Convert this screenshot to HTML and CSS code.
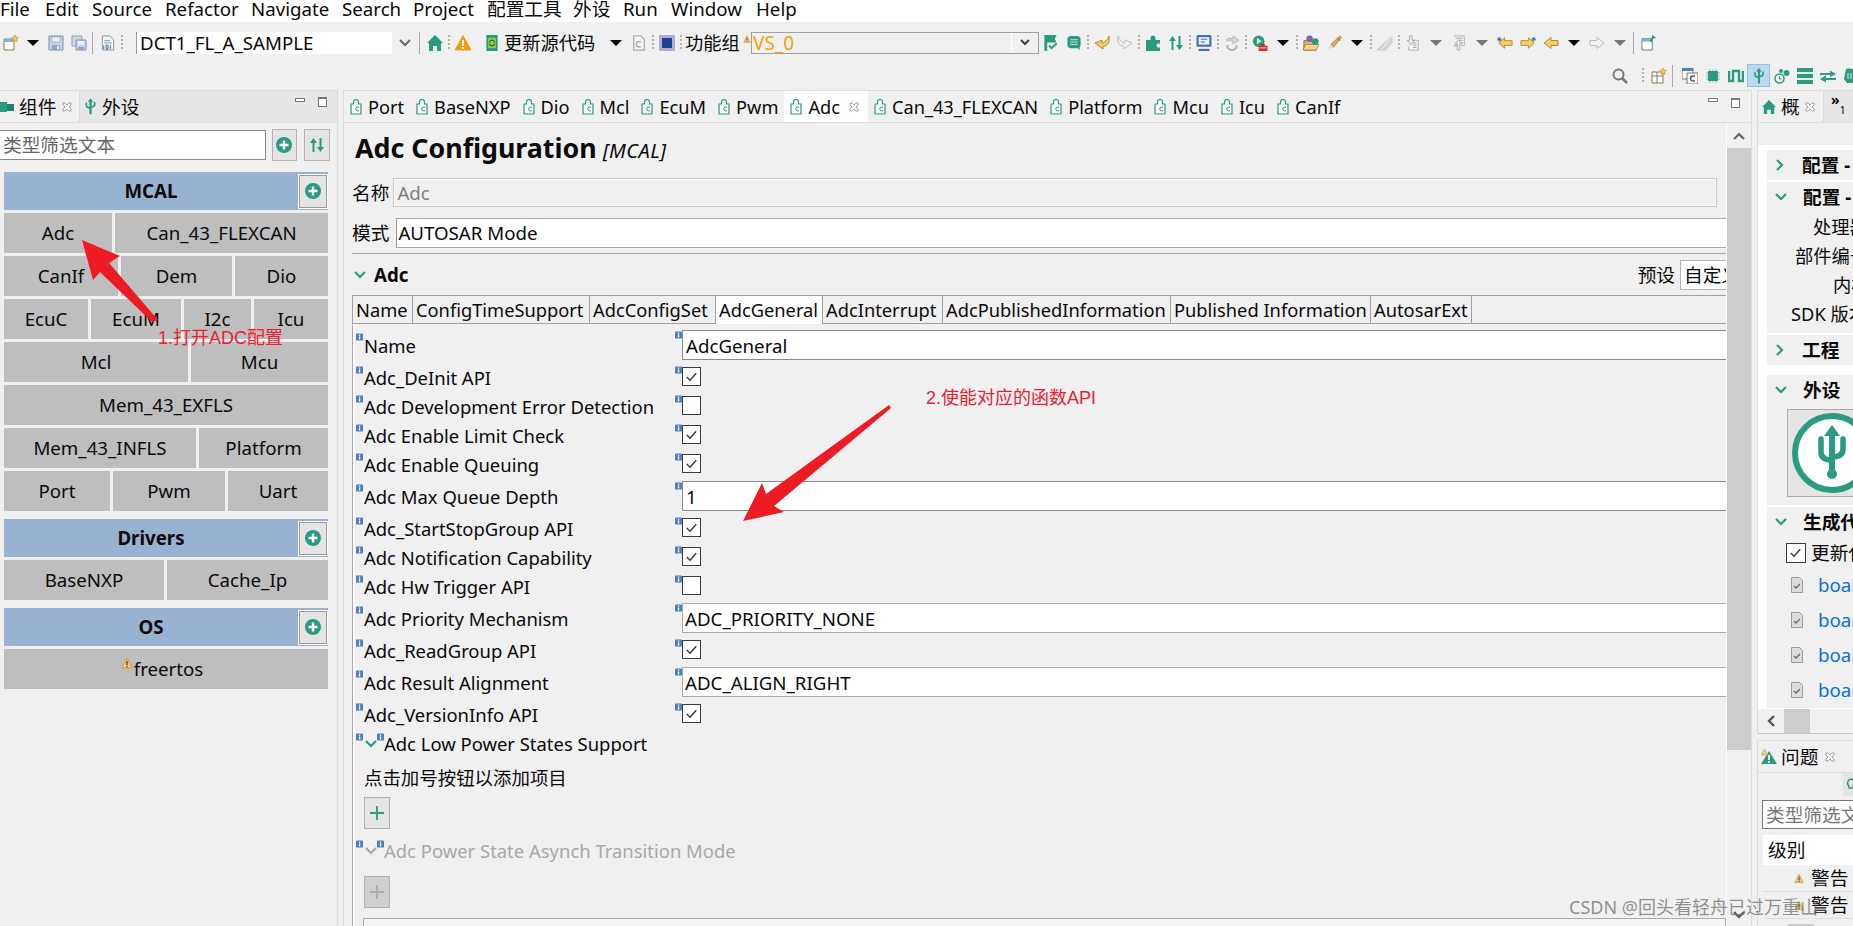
FILE: index.html
```html
<!DOCTYPE html>
<html lang="zh-CN">
<head>
<meta charset="utf-8">
<title>Adc Configuration</title>
<link rel="stylesheet" href="styles.css">
</head>
<body>
<svg class="defs" width="0" height="0">
<defs>
<symbol id="pzl" viewBox="0 0 12 16"><path d="M1 5h2.500V3a2.500 2.500 0 0 1 5 0v2H11v10H1z" fill="#fff" fill-opacity=".5" stroke="#2a9a80" stroke-width="1.200"/><path d="M9 8.200H7.500a1.800 1.800 0 0 0 0 3.600H9" fill="none" stroke="#2a9a80"/></symbol>
<symbol id="tri" viewBox="0 0 12 8"><path d="M0 1h12L6 7z" fill="currentColor"/></symbol>
<symbol id="new" viewBox="0 0 16 16"><path d="M1 4h10v11H1z" fill="#fff" stroke="#8a7a55"/><path d="M1 4h10v3H1z" fill="#7fb0de"/><path d="M12 0l1 2.200 2.500.3-1.800 1.700.5 2.500-2.200-1.200-2.200 1.200.5-2.500L8.500 2.500 11 2.200z" fill="#f5c94a" stroke="#b08a20" stroke-width=".5"/></symbol>
<symbol id="save" viewBox="0 0 16 16"><path d="M1 1h14v14H1z" fill="#c5d4e6" stroke="#7d93ae"/><path d="M4 2h8v5H4z" fill="#eef2f7" stroke="#8fa3bb" stroke-width=".6"/><path d="M4 10h8v5H4z" fill="#8fa6c0"/><path d="M9 11h2v3H9z" fill="#eef2f7"/></symbol>
<symbol id="saveall" viewBox="0 0 16 16"><path d="M1 1h10v10H1z" fill="#d3d8de" stroke="#95a0ad"/><path d="M5 5h10v10H5z" fill="#c5d4e6" stroke="#7d93ae"/><path d="M7 6h6v4H7z" fill="#eef2f7"/><path d="M7 12h6v3H7z" fill="#8fa6c0"/></symbol>
<symbol id="bin" viewBox="0 0 14 17"><path d="M1 1h8l4 4v11H1z" fill="#f4f4f4" stroke="#8492a6"/><path d="M3 6h6M3 8.500h8" stroke="#8492a6"/><path d="M2.500 11v4M5 11h2v4H5zM9.500 11v4" stroke="#3f6aa0" fill="none"/></symbol>
<symbol id="home" viewBox="0 0 16 16"><path d="M8 0L0 8h2v8h4v-5h4v5h4V8h2z" fill="#2a9a80"/></symbol>
<symbol id="warn" viewBox="0 0 16 16"><path d="M8 .5L16 15H0z" fill="#f59b0c" stroke="#f59b0c" stroke-linejoin="round"/><path d="M7 5h2v6H7zM7 12h2v2H7z" fill="#fff"/></symbol>
<symbol id="warnlt" viewBox="0 0 12 12"><path d="M6 1L11 11H1z" fill="#f6cf7f" stroke="#c99a45" stroke-linejoin="round"/><path d="M5.300 4h1.400v4H5.300zM5.300 8.800h1.400v1.400H5.300z" fill="#5b4a20"/></symbol>
<symbol id="gdoc" viewBox="0 0 12 17"><path d="M0 0h12v17H0z" fill="#2a9a80"/><path d="M2 3h8v11H2z" fill="#9ccf3c"/><path d="M3.500 8a2.500 2.500 0 0 1 5 0M8.500 9a2.500 2.500 0 0 1-5 0" fill="none" stroke="#1f6f5c" stroke-width="1.200"/></symbol>
<symbol id="cdoc" viewBox="0 0 14 18"><path d="M1 1h8l4 4v12H1z" fill="#f2f2f2" stroke="#b0b0b0" stroke-width="1.500"/><path d="M9 7.500H7a2.500 2.500 0 0 0 0 6h2" fill="none" stroke="#a8a8a8" stroke-width="1.500"/></symbol>
<symbol id="chip" viewBox="0 0 16 16"><path d="M0 0h16v16H0z" fill="#b3a9d6"/><path d="M3 3h10v10H3z" fill="#1f3f8f"/></symbol>
<symbol id="flag" viewBox="0 0 14 17"><path d="M0 0h13l-2 4 2 4H3v9H0z" fill="#2a9a80"/><path d="M5 11l2.500 3L13 9" fill="none" stroke="#2a9a80" stroke-width="2"/></symbol>
<symbol id="chat" viewBox="0 0 16 17"><rect x="1" y="1" width="14" height="13" rx="4" fill="#2a9a80"/><path d="M4 5h8M4 7.500h8M4 10h8" stroke="#cfe9e2"/><path d="M11 13l3 3v-3z" fill="#2a9a80"/></symbol>
<symbol id="back" viewBox="0 0 16 16"><path d="M15 1c1 6-1 10-6 10v3L1 8l7-3v3c3 0 5-3 7-7z" fill="#f7cd6b" stroke="#b9872a"/></symbol>
<symbol id="fwdg" viewBox="0 0 16 16"><path d="M1 1c-1 6 1 10 6 10v3l8-6-7-3v3C5 8 3 5 1 1z" fill="#f2f2f2" stroke="#bdbdbd"/></symbol>
<symbol id="piece" viewBox="0 0 14 16"><path d="M0 5h4.500V3a2.500 2.500 0 0 1 5 0v2H14v3.500h-1.500a2 2 0 0 0 0 4H14V16H0z" fill="#2a9a80"/></symbol>
<symbol id="updown" viewBox="0 0 14 16"><path d="M3.500 1L0 6h2.500v9h2V6H7zM10.500 15L14 10h-2.500V1h-2v9H7z" fill="#2a9a80"/></symbol>
<symbol id="monitor" viewBox="0 0 14 15"><rect x="0" y="0" width="14" height="11" rx="1.500" fill="#3f6fb5"/><path d="M2 2h10v7H2z" fill="#eaf1fa"/><path d="M4 4h6M4 6.500h4" stroke="#3f6fb5"/><path d="M2 13h10v2H2z" fill="#3f6fb5"/></symbol>
<symbol id="nextg" viewBox="0 0 16 16"><path d="M2 5a6 6 0 0 1 7-1V1l6 4-6 4V6.500a3.500 3.500 0 0 0-5 0z" fill="#d8d8d8" stroke="#a8a8a8" stroke-width=".7"/><path d="M4 10a4.500 3.500 0 1 0 8 0" fill="none" stroke="#b4b4b4" stroke-width="2"/></symbol>
<symbol id="run" viewBox="0 0 17 18"><circle cx="7" cy="7" r="6.500" fill="#2a9a80"/><path d="M5 3.500L10.500 7 5 10.500z" fill="#e8f5c8"/><path d="M7 12h10v6H7z" fill="#d4302a"/><path d="M10 10h4v2h-4z" fill="#a82420"/><path d="M8 14.500h8" stroke="#fff" stroke-width=".8"/></symbol>
<symbol id="folder" viewBox="0 0 17 17"><path d="M1 6h5l1 1h7v9H1z" fill="#e7bb6e" stroke="#8d6a2c"/><path d="M0 16l3-6h14l-3 6z" fill="#f4d48f" stroke="#8d6a2c" stroke-width=".7"/><circle cx="7" cy="4" r="3.500" fill="#7b66b0"/><circle cx="13" cy="7" r="3.500" fill="#2a9a80"/></symbol>
<symbol id="pen" viewBox="0 0 17 17"><path d="M15 1l1.500 1.500L8 13l-3-3z" fill="#e9a94a" stroke="#9b6c22" stroke-width=".7"/><path d="M5 10l3 3-3 1.500-1.500-1z" fill="#d9d9d9"/><path d="M0 17l3-4 2 2z" fill="#f6e7b8"/><path d="M12 3l3 3" stroke="#6c4a16"/></symbol>
<symbol id="knife" viewBox="0 0 17 17"><path d="M16 1L0 16h9l7-8z" fill="#d6d6d6" stroke="#b5b5b5" stroke-width=".6"/><path d="M16 1L10 9l-6 7" fill="none" stroke="#f4f4f4"/></symbol>
<symbol id="ddoc" viewBox="0 0 14 18"><path d="M5 6h8v11H2v-4" fill="#f2f2f2" stroke="#b0b0b0"/><path d="M7 9h4M7 11.500h4M7 14h4" stroke="#9e9e9e"/><path d="M3 1h3v5h2.500L4.500 11 .5 6H3z" fill="#ededed" stroke="#a8a8a8"/></symbol>
<symbol id="udoc" viewBox="0 0 14 18"><path d="M1 1h12v11H9M5 12H1z" fill="#f2f2f2" stroke="#b0b0b0"/><path d="M3 3.500h8M7 6h4M7 8.500h4" stroke="#9e9e9e"/><path d="M5 17h3v-7h2.500L6.500 5l-4 5H5z" fill="#ededed" stroke="#a8a8a8"/></symbol>
<symbol id="bstar" viewBox="0 0 17 13"><path d="M16 4H8V1L2 6.500 8 12V9h8z" fill="#f7cd6b" stroke="#b9872a"/><path d="M2.500 0v5M0 2.500h5M.8.800l3.400 3.400M4.200.8L.8 4.200" stroke="#2f5f9f" stroke-width=".9"/></symbol>
<symbol id="fstar" viewBox="0 0 17 13"><path d="M1 4h8V1l6 5.500L9 12V9H1z" fill="#f7cd6b" stroke="#b9872a"/><path d="M14.500 0v5M12 2.500h5M12.800.8l3.400 3.400M16.200.8l-3.400 3.400" stroke="#2f5f9f" stroke-width=".9"/></symbol>
<symbol id="arrl" viewBox="0 0 16 13"><path d="M15 4H8V1L1 6.500 8 12V9h7z" fill="#f7cd6b" stroke="#b9872a"/></symbol>
<symbol id="arrrg" viewBox="0 0 16 13"><path d="M1 4h7V1l7 5.500L8 12V9H1z" fill="#f4f4f4" stroke="#bdbdbd"/></symbol>
<symbol id="pin" viewBox="0 0 17 17"><path d="M1 4h11v12H1z" fill="#fff" stroke="#85734d"/><path d="M1 4h11v3H1z" fill="#7fb0de"/><path d="M12 0l4 3-3 1-2 4-2-2 2-2z" fill="#2a9a80"/></symbol>
<symbol id="search" viewBox="0 0 16 16"><circle cx="6.500" cy="6.500" r="5" fill="none" stroke="#7a7a7a" stroke-width="2"/><path d="M10 10l5 5" stroke="#7a7a7a" stroke-width="2.500"/></symbol>
<symbol id="addtbl" viewBox="0 0 16 16"><path d="M1 4h11v11H1z" fill="#fff" stroke="#8a7a55"/><path d="M1 8h11M6 4v11" stroke="#8a7a55"/><path d="M12 0l1 2 2.500.4-1.800 1.700.4 2.400-2.100-1.200-2.200 1.200.5-2.400L8.500 2.400 11 2z" fill="#f5c94a" stroke="#b08a20" stroke-width=".5"/></symbol>
<symbol id="cview" viewBox="0 0 16 16"><path d="M0 0h11v11H0z" fill="#fff" stroke="#85734d"/><path d="M0 0h11v3H0z" fill="#4f81bd"/><path d="M5 5h11v11H5z" fill="#f7f7f7" stroke="#85734d"/><path d="M13 8h-2a2.500 2.500 0 0 0 0 5h2" fill="none" stroke="#2f5f9f" stroke-width="1.500"/></symbol>
<symbol id="tchip" viewBox="0 0 16 16"><path d="M1 5h14M1 8h14M1 11h14M5 1v14M8 1v14M11 1v14" stroke="#2a9a80" stroke-opacity=".55"/><path d="M3 3h10v10H3z" fill="#2a9a80"/></symbol>
<symbol id="wave" viewBox="0 0 16 16"><path d="M1 3v10h4V3h6v10h4V3" fill="none" stroke="#2a9a80" stroke-width="2.400"/></symbol>
<symbol id="cactus" viewBox="0 0 12 18"><path d="M6 0l3 4H7.200v12.500a1.200 1.200 0 0 1-2.400 0V4H3z" fill="#2a9a80"/><path d="M1.500 5.500v2.500c0 1.500 1 2.500 4 2.500M10.500 4.500V7c0 1.500-1 2.500-4.500 2.500" fill="none" stroke="#2a9a80" stroke-width="1.800" stroke-linecap="round"/></symbol>
<symbol id="timer" viewBox="0 0 16 16"><circle cx="5.500" cy="10.500" r="4.500" fill="none" stroke="#2a9a80" stroke-width="1.500"/><path d="M5.500 8v3h2" fill="none" stroke="#2a9a80"/><circle cx="12.500" cy="5" r="3" fill="#2a9a80"/><circle cx="7" cy="3" r="2" fill="#2a9a80"/></symbol>
<symbol id="stack" viewBox="0 0 16 16"><path d="M0 0h16v4H0zM0 6h16v4H0zM0 12h16v4H0z" fill="#2a9a80"/></symbol>
<symbol id="swap" viewBox="0 0 16 16"><path d="M0 5h10V2.500L16 6l-6 3V7H0zM16 10H6V7.500L0 11l6 3.500V12h10z" fill="#2a9a80"/></symbol>
<symbol id="last" viewBox="0 0 16 16"><path d="M3 1c3-1 9 0 11 2v9l-5 3H4L1 11z" fill="#2a9a80"/><path d="M5 5v6M8 5v6M11 5v6" stroke="#d8efe9"/></symbol>
<symbol id="plusc" viewBox="0 0 16 16"><circle cx="8" cy="8" r="8" fill="#2a9a80"/><path d="M8 3.500v9M3.500 8h9" stroke="#fff" stroke-width="2.400"/></symbol>
<symbol id="x" viewBox="0 0 10 10"><path d="M1 1l2 0 2 2 2-2 2 0 0 2-2 2 2 2 0 2-2 0-2-2-2 2-2 0 0-2 2-2-2-2z" fill="#fff" stroke="#8a8a8a" stroke-width=".8"/></symbol>
<symbol id="pieces" viewBox="0 0 14 14"><path d="M0 2h7v3h3v3h-3v4H0z" fill="#2a9a80"/><path d="M7 4h7v7H7z" fill="#22806a"/></symbol>
<symbol id="fdoc" viewBox="0 0 12 16"><path d="M.5.5h8l3 3v12H.5z" fill="#dcdcdc" stroke="#9a9a9a"/><path d="M3 9l2 2 4-4" fill="none" stroke="#666" stroke-width="1.300"/></symbol>
<symbol id="lamp" viewBox="0 0 10 14"><path d="M5 2a4 4 0 0 0-2 7v2h4V9a4 4 0 0 0-2-7z" fill="none" stroke="#2a9a80" stroke-width="1.500"/></symbol>
<symbol id="problem" viewBox="0 0 16 16"><path d="M8 2L16 15H0z" fill="#2a9a80"/><path d="M7 6h2v5H7zM7 12h2v2H7z" fill="#fff"/><path d="M3.500 0L7 6H0z" fill="#f6cf7f" stroke="#c99a45" stroke-width=".6"/></symbol>
<symbol id="info" viewBox="0 0 8 8"><rect width="8" height="8" rx="1" fill="#4f7fb8"/><path d="M3.300 1.200h1.500v1.300H3.300zM3.300 3.300h1.500v3.500H3.300z" fill="#fff"/></symbol>
<symbol id="check" viewBox="0 0 18 18"><path d="M4 9.500l3.500 3.500L14 5.500" fill="none" stroke="#3a3a3a" stroke-width="1.500"/></symbol>
<symbol id="usbbig" viewBox="0 0 80 80"><circle cx="40" cy="40" r="37" fill="#fff" stroke="#2a9a80" stroke-width="6"/><path d="M40 12l8 11h-5v37a3 3 0 1 1-6 0V23h-5z" fill="#2a9a80"/><circle cx="40" cy="61" r="5" fill="#2a9a80"/><path d="M29 26v13c0 5 3 8 11 8M51 26v10c0 5-3 8-11 8" fill="none" stroke="#2a9a80" stroke-width="5.500" stroke-linecap="round"/></symbol>
</defs>
</svg>

<nav class="menubar">
<span class="mi w45">File</span><span class="mi w47">Edit</span><span class="mi w73">Source</span><span class="mi w86">Refactor</span><span class="mi w91">Navigate</span><span class="mi w71">Search</span><span class="mi w74">Project</span><span class="mi w86">配置工具</span><span class="mi w50">外设</span><span class="mi w48">Run</span><span class="mi w85">Window</span><span class="mi">Help</span>
</nav>

<header class="toolbar">
<div class="tbrow">
<span class="slot w22"><svg class="ic16"><use href="#new"/></svg></span>
<span class="slot w22 blk"><svg class="tri"><use href="#tri"/></svg></span>
<span class="slot"><svg class="ic16"><use href="#save"/></svg></span>
<span class="slot"><svg class="ic16"><use href="#saveall"/></svg></span>
<i class="vsep"></i>
<span class="slot"><svg class="ic16"><use href="#bin"/></svg></span>
<i class="grip"></i>
<span class="pick">DCT1_FL_A_SAMPLE</span>
<span class="slot w25"><svg class="chev" viewBox="0 0 12 8"><path d="M1 1l5 5 5-5" fill="none" stroke="#666" stroke-width="2"/></svg></span>
<i class="vsep"></i>
<span class="slot"><svg class="ic16"><use href="#home"/></svg></span>
<i class="grip"></i>
<span class="slot"><svg class="ic16"><use href="#warn"/></svg></span>
<span class="slot ml6"><svg class="ic16"><use href="#gdoc"/></svg></span>
<span class="tb-label w89 ml1 fs183">更新源代码</span>
<span class="slot ml11 blk"><svg class="tri"><use href="#tri"/></svg></span>
<span class="slot"><svg class="ic16"><use href="#cdoc"/></svg></span>
<i class="grip"></i>
<span class="slot"><svg class="ic16"><use href="#chip"/></svg></span>
<i class="grip"></i>
<span class="tb-label w54 ml2 fs183">功能组</span>
<svg class="mini"><use href="#warnlt"/></svg>
<span class="combo"><span class="combo-t">VS_0</span><span class="combo-b"><svg class="chev" viewBox="0 0 12 8"><path d="M2 1l4 4 4-4" fill="none" stroke="#444" stroke-width="2"/></svg></span></span>
<span class="slot"><svg class="ic16"><use href="#flag"/></svg></span>
<span class="slot"><svg class="ic16"><use href="#chat"/></svg></span>
<i class="grip"></i>
<span class="slot"><svg class="ic16"><use href="#back"/></svg></span>
<span class="slot"><svg class="ic16"><use href="#fwdg"/></svg></span>
<i class="grip"></i>
<span class="slot"><svg class="ic16"><use href="#piece"/></svg></span>
<span class="slot"><svg class="ic16"><use href="#updown"/></svg></span>
<i class="grip"></i>
<span class="slot"><svg class="ic16"><use href="#monitor"/></svg></span>
<i class="grip"></i>
<span class="slot"><svg class="ic16"><use href="#nextg"/></svg></span>
<i class="grip"></i>
<span class="slot"><svg class="ic16"><use href="#run"/></svg></span>
<span class="slot blk"><svg class="tri"><use href="#tri"/></svg></span>
<i class="grip"></i>
<span class="slot"><svg class="ic16"><use href="#folder"/></svg></span>
<span class="slot"><svg class="ic16"><use href="#pen"/></svg></span>
<span class="slot blk"><svg class="tri"><use href="#tri"/></svg></span>
<i class="grip"></i>
<span class="slot"><svg class="ic16"><use href="#knife"/></svg></span>
<i class="grip"></i>
<span class="slot"><svg class="ic16"><use href="#ddoc"/></svg></span>
<span class="slot gry"><svg class="tri"><use href="#tri"/></svg></span>
<span class="slot"><svg class="ic16"><use href="#udoc"/></svg></span>
<span class="slot gry"><svg class="tri"><use href="#tri"/></svg></span>
<span class="slot"><svg class="ic16"><use href="#bstar"/></svg></span>
<span class="slot"><svg class="ic16"><use href="#fstar"/></svg></span>
<span class="slot"><svg class="ic16"><use href="#arrl"/></svg></span>
<span class="slot blk"><svg class="tri"><use href="#tri"/></svg></span>
<span class="slot"><svg class="ic16"><use href="#arrrg"/></svg></span>
<span class="slot gry"><svg class="tri"><use href="#tri"/></svg></span>
<i class="vsep"></i>
<span class="slot"><svg class="ic16"><use href="#pin"/></svg></span>
</div>
<div class="tbrow row2">
<span class="slot"><svg class="ic16"><use href="#search"/></svg></span>
<i class="grip grip-far"></i>
<span class="slot"><svg class="ic16"><use href="#addtbl"/></svg></span>
<i class="vsep"></i>
<span class="slot"><svg class="ic16"><use href="#cview"/></svg></span>
<span class="slot"><svg class="ic16"><use href="#tchip"/></svg></span>
<span class="slot"><svg class="ic16"><use href="#wave"/></svg></span>
<span class="slot sel"><svg class="ic16"><use href="#cactus"/></svg></span>
<span class="slot"><svg class="ic16"><use href="#timer"/></svg></span>
<span class="slot"><svg class="ic16"><use href="#stack"/></svg></span>
<span class="slot"><svg class="ic16"><use href="#swap"/></svg></span>
<span class="slot"><svg class="ic16"><use href="#last"/></svg></span>
</div>
</header>

<main class="workbench">
<aside class="leftpane">
<div class="viewtabs">
<div class="vt-active"><svg class="ic14"><use href="#pieces"/></svg><span>组件</span><svg class="xic"><use href="#x"/></svg></div>
<div class="vt-rest"><svg class="ic-usb"><use href="#cactus"/></svg><span>外设</span><i class="minb"></i><i class="maxb"></i></div>
</div>
<div class="filterbar">
<span class="filter">类型筛选文本</span>
<span class="sqbtn"><svg class="ic16"><use href="#plusc"/></svg></span>
<span class="sqbtn"><svg class="ic16"><use href="#updown"/></svg></span>
</div>
<div class="palette">
<div class="ghead"><span>MCAL</span><b class="addb"><svg class="ic16"><use href="#plusc"/></svg></b></div>
<div class="crow r1"><span>Adc</span><span>Can_43_FLEXCAN</span></div>
<div class="crow r2"><span>CanIf</span><span>Dem</span><span>Dio</span></div>
<div class="crow r3"><span>EcuC</span><span>EcuM</span><span>I2c</span><span>Icu</span></div>
<div class="crow r4"><span>Mcl</span><span>Mcu</span></div>
<div class="crow r5"><span>Mem_43_EXFLS</span></div>
<div class="crow r6"><span>Mem_43_INFLS</span><span>Platform</span></div>
<div class="crow r7"><span>Port</span><span>Pwm</span><span>Uart</span></div>
<div class="ghead gap"><span>Drivers</span><b class="addb"><svg class="ic16"><use href="#plusc"/></svg></b></div>
<div class="crow r8"><span>BaseNXP</span><span>Cache_Ip</span></div>
<div class="ghead gap"><span>OS</span><b class="addb"><svg class="ic16"><use href="#plusc"/></svg></b></div>
<div class="crow r5"><span><svg class="warnup"><use href="#warnlt"/></svg>freertos</span></div>
</div>
</aside>

<section class="editor">
<div class="edtabs">
<span class="et"><svg class="pz"><use href="#pzl"/></svg>Port</span>
<span class="et"><svg class="pz"><use href="#pzl"/></svg>BaseNXP</span>
<span class="et"><svg class="pz"><use href="#pzl"/></svg>Dio</span>
<span class="et"><svg class="pz"><use href="#pzl"/></svg>Mcl</span>
<span class="et"><svg class="pz"><use href="#pzl"/></svg>EcuM</span>
<span class="et"><svg class="pz"><use href="#pzl"/></svg>Pwm</span>
<span class="et et-on"><svg class="pz"><use href="#pzl"/></svg>Adc<svg class="xic x9"><use href="#x"/></svg></span>
<span class="et"><svg class="pz"><use href="#pzl"/></svg>Can_43_FLEXCAN</span>
<span class="et"><svg class="pz"><use href="#pzl"/></svg>Platform</span>
<span class="et"><svg class="pz"><use href="#pzl"/></svg>Mcu</span>
<span class="et"><svg class="pz"><use href="#pzl"/></svg>Icu</span>
<span class="et"><svg class="pz"><use href="#pzl"/></svg>CanIf</span>
<i class="minb min-ed"></i><i class="maxb max-ed"></i>
</div>
<div class="edbody">
<div class="form">
<div class="title"><h1>Adc Configuration</h1><em>[MCAL]</em></div>
<div class="frow fr-name"><label>名称</label><span class="ro">Adc</span></div>
<div class="frow fr-mode"><label>模式</label><span class="in">AUTOSAR Mode</span></div>
<hr class="sep">
<div class="sect"><svg class="chv" viewBox="0 0 12 8"><path d="M1 1l5 5 5-5" fill="none" stroke="#2a9a80" stroke-width="2.200"/></svg><b>Adc</b><span class="preset">预设</span><span class="pcombo">自定义</span></div>
<div class="subtabs">
<span class="st w60">Name</span><span class="st w177">ConfigTimeSupport</span><span class="st w126">AdcConfigSet</span><span class="st st-on w107">AdcGeneral</span><span class="st w120">AdcInterrupt</span><span class="st w228">AdcPublishedInformation</span><span class="st w200">Published Information</span><span class="st w101">AutosarExt</span>
</div>
<div class="params">
<div class="p p-in"><svg class="i1"><use href="#info"/></svg><span class="pl">Name</span><svg class="i2"><use href="#info"/></svg><span class="pv">AdcGeneral</span></div>
<div class="p"><svg class="i1"><use href="#info"/></svg><span class="pl">Adc_DeInit API</span><svg class="i2"><use href="#info"/></svg><span class="cb"><svg><use href="#check"/></svg></span></div>
<div class="p"><svg class="i1"><use href="#info"/></svg><span class="pl">Adc Development Error Detection</span><svg class="i2"><use href="#info"/></svg><span class="cb"></span></div>
<div class="p"><svg class="i1"><use href="#info"/></svg><span class="pl">Adc Enable Limit Check</span><svg class="i2"><use href="#info"/></svg><span class="cb"><svg><use href="#check"/></svg></span></div>
<div class="p"><svg class="i1"><use href="#info"/></svg><span class="pl">Adc Enable Queuing</span><svg class="i2"><use href="#info"/></svg><span class="cb"><svg><use href="#check"/></svg></span></div>
<div class="p p-in"><svg class="i1"><use href="#info"/></svg><span class="pl">Adc Max Queue Depth</span><svg class="i2"><use href="#info"/></svg><span class="pv">1</span></div>
<div class="p"><svg class="i1"><use href="#info"/></svg><span class="pl">Adc_StartStopGroup API</span><svg class="i2"><use href="#info"/></svg><span class="cb"><svg><use href="#check"/></svg></span></div>
<div class="p"><svg class="i1"><use href="#info"/></svg><span class="pl">Adc Notification Capability</span><svg class="i2"><use href="#info"/></svg><span class="cb"><svg><use href="#check"/></svg></span></div>
<div class="p"><svg class="i1"><use href="#info"/></svg><span class="pl">Adc Hw Trigger API</span><svg class="i2"><use href="#info"/></svg><span class="cb"></span></div>
<div class="p p-in"><svg class="i1"><use href="#info"/></svg><span class="pl">Adc Priority Mechanism</span><svg class="i2"><use href="#info"/></svg><span class="pv pv-c">ADC_PRIORITY_NONE</span></div>
<div class="p"><svg class="i1"><use href="#info"/></svg><span class="pl">Adc_ReadGroup API</span><svg class="i2"><use href="#info"/></svg><span class="cb"><svg><use href="#check"/></svg></span></div>
<div class="p p-in"><svg class="i1"><use href="#info"/></svg><span class="pl">Adc Result Alignment</span><svg class="i2"><use href="#info"/></svg><span class="pv pv-c">ADC_ALIGN_RIGHT</span></div>
<div class="p"><svg class="i1"><use href="#info"/></svg><span class="pl">Adc_VersionInfo API</span><svg class="i2"><use href="#info"/></svg><span class="cb"><svg><use href="#check"/></svg></span></div>
<div class="grp g1"><svg class="i1"><use href="#info"/></svg><svg class="chv2" viewBox="0 0 12 8"><path d="M1 1l5 5 5-5" fill="none" stroke="#2a9a80" stroke-width="2.200"/></svg><svg class="i1"><use href="#info"/></svg><span>Adc Low Power States Support</span></div>
<div class="hint">点击加号按钮以添加项目</div>
<span class="addsq"><svg viewBox="0 0 16 16"><path d="M8 1v14M1 8h14" stroke="#2a9a80" stroke-width="1.800"/></svg></span>
<div class="grp g2"><svg class="i1"><use href="#info"/></svg><svg class="chv2" viewBox="0 0 12 8"><path d="M1 1l5 5 5-5" fill="none" stroke="#aaa" stroke-width="2.200"/></svg><svg class="i1"><use href="#info"/></svg><span>Adc Power State Asynch Transition Mode</span></div>
<span class="addsq off"><svg viewBox="0 0 16 16"><path d="M8 1v14M1 8h14" stroke="#aaa" stroke-width="1.800"/></svg></span>
<div class="tblbox"></div>
</div>
</div>
<div class="vscroll">
<span class="up"><svg viewBox="0 0 12 8"><path d="M1 7l5-5 5 5" fill="none" stroke="#666" stroke-width="2.200"/></svg></span>
<span class="thumb"></span>
<span class="dn"><svg viewBox="0 0 12 8"><path d="M1 1l5 5 5-5" fill="none" stroke="#555" stroke-width="2.200"/></svg></span>
</div>
</div>
</section>

<aside class="rightpane">
<div class="ovpanel">
<div class="rtabs">
<div class="rt-on"><svg class="ic14"><use href="#home"/></svg><span>概</span><svg class="xic"><use href="#x"/></svg></div>
<div class="rt-more"><span class="chevs">»</span><sub>1</sub></div>
</div>
<div class="rbody">
<div class="rs rs30"><svg class="chr" viewBox="0 0 8 12"><path d="M1 1l5 5-5 5" fill="none" stroke="#2a9a80" stroke-width="2.200"/></svg><b>配置 - 硬件</b></div>
<div class="rs rs-cfg">
<div class="rsh"><svg class="chd" viewBox="0 0 12 8"><path d="M1 1l5 5 5-5" fill="none" stroke="#2a9a80" stroke-width="2.200"/></svg><b>配置 - 软件</b></div>
<div class="kv k1">处理器</div><div class="kv k2">部件编号</div><div class="kv k3">内核</div><div class="kv k4">SDK 版本</div>
</div>
<div class="rs rs30"><svg class="chr" viewBox="0 0 8 12"><path d="M1 1l5 5-5 5" fill="none" stroke="#2a9a80" stroke-width="2.200"/></svg><b>工程</b></div>
<div class="rs rs-per">
<div class="rsh"><svg class="chd" viewBox="0 0 12 8"><path d="M1 1l5 5 5-5" fill="none" stroke="#2a9a80" stroke-width="2.200"/></svg><b>外设</b></div>
<div class="perbtn"><svg class="usbbig"><use href="#usbbig"/></svg></div>
</div>
<div class="rs rs-gen">
<div class="rsh"><svg class="chd" viewBox="0 0 12 8"><path d="M1 1l5 5 5-5" fill="none" stroke="#2a9a80" stroke-width="2.200"/></svg><b>生成代码</b></div>
<div class="upd"><span class="cb cb-big"><svg><use href="#check"/></svg></span>更新代码</div>
<div class="lnk lnk1"><svg class="fdoc"><use href="#fdoc"/></svg><a>board</a></div>
<div class="lnk"><svg class="fdoc"><use href="#fdoc"/></svg><a>board</a></div>
<div class="lnk"><svg class="fdoc"><use href="#fdoc"/></svg><a>board</a></div>
<div class="lnk"><svg class="fdoc"><use href="#fdoc"/></svg><a>board</a></div>
</div>
</div>
<div class="hscroll"><svg class="hl" viewBox="0 0 8 12"><path d="M7 1L2 6l5 5" fill="none" stroke="#555" stroke-width="2.400"/></svg><span class="hthumb"></span></div>
</div>
<div class="probpanel">
<div class="rtabs">
<div class="pt-on"><svg class="ic16"><use href="#problem"/></svg><span>问题</span><svg class="xic"><use href="#x"/></svg></div>
</div>
<div class="lampbar"><span class="lampb"><svg class="lampic"><use href="#lamp"/></svg></span></div>
<div class="pfilter">类型筛选文本</div>
<div class="ptable">
<div class="ph">级别</div>
<div class="pr"><svg class="w12"><use href="#warnlt"/></svg>警告</div>
<div class="pr"><svg class="w12"><use href="#warnlt"/></svg>警告</div>
</div>
<span class="pscroll"></span>
</div>
</aside>
</main>

<div class="note n1">1.打开ADC配置</div>
<div class="note n2">2.使能对应的函数API</div>
<svg class="arrows" viewBox="0 0 1853 926"><path d="M82 240L120 256 109 263 158 320 152 322 100 272 93 280z" fill="#ed1c24"/><path d="M743 521L762 483 766 494 889 405 891 408 774 506 784 512z" fill="#ed1c24"/></svg>
<div class="watermark">CSDN @回头看轻舟已过万重山</div>
</body>
</html>
```
FILE: styles.css
```css
*{box-sizing:border-box}
html,body{margin:0;padding:0}
body{width:1853px;height:926px;overflow:hidden;position:relative;background:#f0f0f0;color:#0a0a0a;font:18.7px/22px "Noto Sans","Noto Sans CJK SC",sans-serif}
.defs{position:absolute}
svg{display:block;flex:none}
.menubar{height:22px;background:#fff;display:flex;align-items:center;white-space:nowrap;padding-bottom:4px}
.mi{display:block;flex:none}
.w45{width:45px}.w47{width:47px}.w73{width:73px}.w86{width:86px}.w91{width:91px}.w71{width:71px}.w74{width:74px}.w50{width:50px}.w48{width:48px}.w85{width:85px}
.toolbar{height:68px;padding-top:9px}
.tbrow{height:23px;display:flex;align-items:center;white-space:nowrap}
.row2{margin-top:10px;padding-left:1608px}
.slot{width:23px;height:23px;flex:none;display:flex;align-items:center;justify-content:center}
.w22{width:22px}.w25{width:25px}
.ml1{margin-left:1px}.ml2{margin-left:2px}.ml6{margin-left:6px}.ml11{margin-left:11px}
.fs183{font-size:18.3px}
.ic16{width:16px;height:16px}
.ic14{width:14px;height:14px}
.tri{width:12px;height:8px}
.blk{color:#000}.gry{color:#777}
.chev{width:12px;height:8px}
.vsep{width:1px;height:22px;background:#a8a8a8;margin:0 3px 0 2px;flex:none}
.row2 .vsep{margin:0 5px 0 2px}
.grip{width:2px;height:16px;margin:0 1px 0 2px;flex:none;background:repeating-linear-gradient(#b8b0a0 0 2px,transparent 2px 4px)}
.grip-far{margin:0 3px 0 11px}
.pick{width:256px;height:22px;margin-left:12px;background:#fff;border-left:1px solid #999;padding-left:3px;line-height:21px}
.tb-label{flex:none}
.w89{width:89px}.w54{width:54px}
.mini{width:8px;height:10px;margin:-8px 0 0 4px}
.combo{width:288px;height:22px;background:#f0f0f0;border:1px solid #a0a0a0;display:flex;flex:none}
.combo-t{flex:1;color:#f5a000;padding-left:1px;font-size:19px;line-height:20px;border-right:1px solid #fff}
.combo-b{width:26px;display:flex;align-items:center;justify-content:center}
.sel{background:#bcd9f2;border:1px solid #8fc0ea}

.workbench{display:flex;height:836px}
.leftpane{width:338px;border-right:1px solid #dcdcdc;flex:none}
.viewtabs{height:33px;display:flex;border-top:1px solid #dcdcdc;border-bottom:1px solid #dcdcdc}
.vt-active{width:79px;display:flex;align-items:center;flex:none}
.vt-active span{margin-left:5px;width:43px;flex:none}
.xic{width:10px;height:10px}
.vt-rest{flex:1;background:#e6e6e6;border-left:1px solid #dcdcdc;display:flex;align-items:center;padding-left:5px}
.ic-usb{width:11px;height:17px}
.vt-rest span{margin-left:6px;width:38px;flex:none}
.minb{width:10px;height:4px;border:1px solid #777;background:#fff;display:block;flex:none}
.maxb{width:9px;height:10px;border:1px solid #777;border-top-width:2px;background:#fff;display:block;flex:none}
.vt-rest .minb{margin-left:155px;margin-top:-14px}
.vt-rest .maxb{margin-left:13px;margin-top:-9px}
.filterbar{display:flex;align-items:center;height:38px;padding-top:6px}
.filter{width:269px;height:30px;margin-right:6px;background:#fff;border:1px solid #8a8a8a;border-left:0;padding-left:3px;color:#666;line-height:28px}
.sqbtn{width:26px;height:32px;margin-right:7px;background:#e4e4e4;border:1px solid #b4b4b4;display:flex;align-items:center;justify-content:center}
.palette{width:324px;margin:11px 0 0 4px;display:flex;flex-direction:column;gap:3px}
.ghead{height:38px;background:#98b3d1;display:flex;align-items:center;font-weight:700}
.ghead span{width:294px;text-align:center}
.gap{margin-top:5px}
.addb{width:28px;height:33px;background:#e4e4e4;border:1px solid #9a9a9a;outline:1px solid #fff;display:flex;align-items:center;justify-content:center;margin-left:1px}
.crow{display:grid;gap:3px;height:40px}
.crow span{background:#bebebe;display:flex;align-items:center;justify-content:center}
.r1{grid-template-columns:108px 213px}
.r2{grid-template-columns:114px 111px 93px}
.r3{grid-template-columns:84px 90px 67px 74px}
.r4{grid-template-columns:184px 137px}
.r5{grid-template-columns:1fr}
.r6{grid-template-columns:192px 129px}
.r7{grid-template-columns:106px 112px 100px}
.r8{grid-template-columns:160px 161px}
.warnup{width:12px;height:12px;margin:-12px 1px 0 -8px}

.editor{width:1409px;margin-left:5px;border-right:1px solid #dcdcdc;border-left:1px solid #dcdcdc;flex:none;display:flex;flex-direction:column}
.edtabs{height:33px;display:flex;align-items:center;border-top:1px solid #dcdcdc;border-bottom:1px solid #dcdcdc;white-space:nowrap;position:relative;font-size:18.2px}
.et{height:31px;display:flex;align-items:center;gap:6px;padding:0 6px;flex:none}
.pz{width:12px;height:16px}
.et-on{background:#fff;padding-right:9px}
.x9{margin-left:3px}
.min-ed{position:absolute;left:1364px;top:7px}
.max-ed{position:absolute;left:1387px;top:7px}
.edbody{flex:1;display:flex;min-height:0}
.form{flex:1;min-width:0;overflow:hidden;padding-left:8px}
.title{height:50px;display:flex;align-items:center;padding-left:3px;white-space:nowrap}
h1{margin:0;font-size:26.8px;line-height:30px;font-weight:700}
.title em{font-size:20px;letter-spacing:.5px;margin:6px 0 0 6px}
.frow{display:flex;align-items:center;white-space:nowrap}
.fr-name{height:29px;margin-top:5px}
.fr-mode{height:30px;margin-top:11px}
.frow label{flex:none}
.ro{margin-left:4px;width:1324px;height:29px;flex:none;border:1px solid #c8c8c8;box-shadow:inset 0 0 0 1px #fbfbfb;color:#7d7d7d;padding-left:3px;line-height:27px}
.in{margin-left:7px;flex:1;height:30px;background:#fff;border-left:1px solid #9a9a9a;border-top:1px solid #aaa;border-bottom:1px solid #aaa;padding-left:1px;line-height:27px}
.sep{margin:5px 0 0;border:0;border-top:1px solid #a8a8a8;height:0}
.sect{height:30px;margin-top:6px;display:flex;align-items:center}
.chv{width:12px;height:8px;margin-left:2px}
.sect b{margin-left:8px}
.preset{margin-left:auto}
.pcombo{width:46px;height:30px;margin-left:5px;background:#fff;border:1px solid #b4b4b4;border-right:0;overflow:hidden;white-space:nowrap;padding-left:3px;line-height:28px}
.subtabs{height:29px;margin-top:5px;display:flex;border-top:1px solid #a0a0a0;border-bottom:1px solid #a0a0a0;border-left:1px solid #a0a0a0;white-space:nowrap;font-size:18.3px}
.st{height:27px;flex:none;border-right:1px solid #a0a0a0;padding-left:3px;line-height:27px}
.st-on{background:#fff;height:28px}
.w60{width:60px}.w177{width:177px}.w126{width:126px}.w107{width:107px}.w120{width:120px}.w228{width:228px}.w200{width:200px}.w101{width:101px}
.params{border-left:1px solid #a8a8a8;box-shadow:inset 2px 0 0 #fafafa;padding:8px 0 0 3px;height:640px;display:flex;flex-direction:column;gap:10px;white-space:nowrap;font-size:18.45px}
.p{height:19px;display:flex;align-items:center}
.p-in{height:30px;margin:-2px 0 -3px}
.i1{width:7px;height:8px;align-self:flex-start;margin-top:-1px}
.p-in .i1{margin-top:3px}
.pl{width:311px;margin-left:1px;flex:none;padding-top:2px}
.i2{width:7px;height:8px;align-self:flex-start;margin-top:-1px}
.p-in .i2{margin-top:1px}
.cb{width:19px;height:19px;background:#fff;border:1px solid #3a3a3a;flex:none}
.cb svg{width:17px;height:17px}
.pv{flex:1;height:30px;background:#fff;border-left:1px solid #8a8a8a;border-top:1px solid #8a8a8a;border-bottom:1px solid #8a8a8a;padding-left:3px;line-height:29px;font-size:18.7px}
.pv-c{border-color:#aaa;padding-left:2px}
.grp{display:flex;align-items:center;height:22px}
.grp .i1{margin-top:0}
.chv2{width:12px;height:8px;margin:0 0 0 2px}
.hint{margin:2px 0 0 8px}
.addsq{width:26px;height:32px;margin:-2px 0 0 8px;background:#e4e4e4;border:1px solid #b0b0b0;display:flex;align-items:center;justify-content:center;flex:none}
.addsq svg{width:16px;height:16px}
.g2{color:#a8a8a8;margin-top:1px}
.addsq.off{background:#cfcfcf;margin-top:4px}
.tblbox{height:60px;margin:0 0 0 7px;border:1px solid #aaa;background:#f4f4f4;flex:none}
.vscroll{width:25px;border-left:1px solid #fff;display:flex;flex-direction:column;flex:none}
.up{height:25px;background:#f0f0f0;display:flex;align-items:center;justify-content:center}
.up svg,.dn svg{width:12px;height:8px}
.thumb{height:602px;background:#cdcdcd}
.dn{margin-top:auto;height:22px;display:flex;align-items:center;justify-content:center}

.rightpane{margin-left:5px;flex:1;min-width:0;display:flex;flex-direction:column;white-space:nowrap;overflow:hidden}
.ovpanel{height:644px;border-left:1px solid #dcdcdc;border-bottom:1px solid #c8c8c8;flex:none}
.rtabs{height:33px;display:flex;border-top:1px solid #dcdcdc;border-bottom:1px solid #dcdcdc;overflow:hidden}
.rt-on{width:65px;display:flex;align-items:center;padding-left:4px;flex:none;overflow:hidden}
.rt-on span{margin-left:5px}
.rt-on .xic{margin-left:5px}
.rt-more{flex:1;background:#e6e6e6;border-left:1px solid #dcdcdc;padding-left:7px;font-size:14px;line-height:18px;display:flex}
.chevs{font-weight:700}
sub{font-size:11px;line-height:11px;margin-top:13px}
.rbody{height:564px;margin-top:22px;background:#fff;padding:5px 0 0 9px;overflow:hidden}
.rs{background:#f0f0f0;margin-bottom:2px;width:100%}
.rs30{height:30px;display:flex;align-items:center}
.chr{width:8px;height:12px;margin-left:9px}
.rs30 b{margin-left:18px}
.rs-cfg{height:151px}
.rsh{height:30px;display:flex;align-items:center}
.chd{width:12px;height:8px;margin-left:8px}
.rsh b{margin-left:16px}
.kv{height:29px;line-height:29px;font-size:18.3px}
.k1{padding-left:46px}.k2{padding-left:28px}.k3{padding-left:66px}.k4{padding-left:24px}
.rs-per{height:130px;margin-top:10px}
.perbtn{width:70px;height:88px;margin:4px 0 0 20px;background:#e4e4e4;border:1px solid #aaa;padding:3px 0 0 4px;overflow:hidden}
.usbbig{width:80px;height:80px}
.rs-gen{height:201px}
.upd{display:flex;align-items:center;gap:5px;padding-left:19px;height:20px;margin-top:6px}
.cb-big{width:20px;height:20px}
.lnk{height:35px;display:flex;align-items:center;padding-left:24px}
.lnk1{margin-top:4px}
.fdoc{width:12px;height:16px}
.lnk a{margin-left:15px;color:#0a6fd8}
.hscroll{height:24px;display:flex;align-items:center}
.hl{width:8px;height:12px;margin-left:9px}
.hthumb{width:26px;height:24px;margin-left:9px;background:#cdcdcd}
.probpanel{margin-top:6px;border-left:1px solid #dcdcdc;flex:1}
.pt-on{width:85px;display:flex;align-items:center;padding-left:3px;flex:none}
.pt-on span{margin-left:4px}
.pt-on .xic{margin-left:7px}
.lampbar{height:23px;display:flex;justify-content:flex-end}
.lampb{width:10px;height:23px;background:#e4e4e4;padding-left:3px}
.lampic{width:10px;height:14px;margin-top:4px}
.pfilter{height:29px;margin:4px 0 0 4px;background:#fff;border:1px solid #777;border-right:0;padding-left:3px;color:#777;line-height:27px}
.ptable{margin:6px 0 0 5px}
.ph{height:30px;background:#fff;padding-left:5px;line-height:30px}
.pr{height:27px;display:flex;align-items:center;padding-left:31px;gap:7px;border-bottom:1px solid #ddd}
.w12{width:10px;height:11px}
.pscroll{display:block;width:26px;height:4px;background:#cdcdcd;margin:5px 0 0 30px}

.note{position:absolute;color:#ee2030;font-family:"Liberation Sans","Noto Sans CJK SC",sans-serif;font-size:18px;line-height:20px;white-space:nowrap}
.n1{left:158px;top:328px}
.n2{left:926px;top:388px}
.arrows{position:absolute;left:0;top:0;width:1853px;height:926px;pointer-events:none}
.watermark{position:absolute;left:1569px;top:896px;color:rgba(110,110,110,.75);font-size:18px;white-space:nowrap}
```
